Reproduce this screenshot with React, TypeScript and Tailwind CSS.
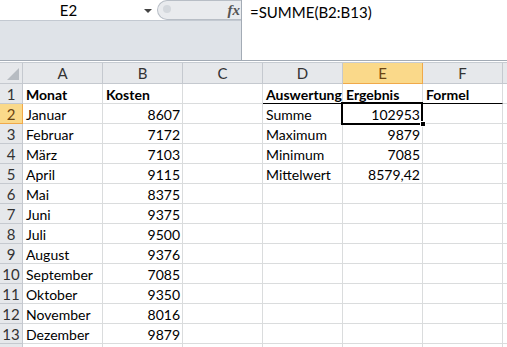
import React from 'react';

const cols = ['A', 'B', 'C', 'D', 'E', 'F'];

type Cell = { v?: string; bold?: boolean; right?: boolean; under?: boolean };

const months = ['Januar', 'Februar', 'März', 'April', 'Mai', 'Juni', 'Juli', 'August', 'September', 'Oktober', 'November', 'Dezember'];
const costs = ['8607', '7172', '7103', '9115', '8375', '9375', '9500', '9376', '7085', '9350', '8016', '9879'];

const summary: [string, string][] = [
  ['Summe', '102953'],
  ['Maximum', '9879'],
  ['Minimum', '7085'],
  ['Mittelwert', '8579,42'],
];

function buildRows(): Cell[][] {
  const rows: Cell[][] = [];
  rows.push([
    { v: 'Monat', bold: true },
    { v: 'Kosten', bold: true },
    {},
    { v: 'Auswertung', bold: true, under: true },
    { v: 'Ergebnis', bold: true, under: true },
    { v: 'Formel', bold: true, under: true },
  ]);
  months.forEach((m, i) => {
    const s = summary[i];
    rows.push([
      { v: m },
      { v: costs[i], right: true },
      {},
      s ? { v: s[0] } : {},
      s ? { v: s[1], right: true } : {},
      {},
    ]);
  });
  rows.push([{}, {}, {}, {}, {}, {}]);
  return rows;
}

const FormulaBar: React.FC = () => (
  <div className="flex h-[61px] border-b border-[#a3abb5]">
    <div className="flex w-[241px] flex-col bg-[#dfe3e8]">
      <div className="flex h-[21px] border-b border-[#c3c9d1] bg-white">
        <div className="relative flex w-[157px] items-center justify-center text-[15px] text-black">
          <span className="-ml-[20px]">E2</span>
          <span className="absolute left-[144px] top-[9px] h-0 w-0 border-x-[4px] border-t-[4px] border-x-transparent border-t-[#444]" />
        </div>
        <div className="relative flex flex-1 items-center justify-end rounded-l-full border border-r-0 border-[#b8bec6] bg-[#e9ebee] pr-[1px]">
          <span className="absolute left-[5px] top-[4px] h-[8px] w-[8px] rounded-full bg-[#d4d8dd]" />
          <span className="font-['Liberation_Serif',serif] text-[15px] font-bold italic leading-none text-[#555]">fx</span>
        </div>
      </div>
    </div>
    <div className="flex-1 border-l border-[#a3abb5] bg-white pl-[8px] pt-[1px] text-[15px] text-black">
      =SUMME(B2:B13)
    </div>
  </div>
);

const App: React.FC = () => {
  const rows = buildRows();
  return (
    <div className="h-[347px] w-[507px] overflow-hidden bg-white font-['Lato','Noto_Sans',sans-serif]">
      <FormulaBar />
      <div className="h-[2px] border-b border-[#c6cbd1] bg-white" />
      <div className="grid grid-cols-[23px_repeat(6,80px)_5px]">
        <div className="relative h-[21px] border-b border-r border-[#c5c9cf] bg-[#e6e8eb]">
          <span className="absolute bottom-[3px] right-[3px] h-0 w-0 border-b-[12px] border-l-[12px] border-l-transparent border-b-[#b7bcc2]" />
        </div>
        {cols.map(c => (
          <div
            key={c}
            className={
              c === 'E'
                ? 'flex h-[21px] items-center justify-center border-b border-r border-[#f0a94a] bg-[#fad98a] text-[15px] text-[#6b4412]'
                : 'flex h-[21px] items-center justify-center border-b border-r border-[#c5c9cf] bg-[#e6e8eb] text-[15px] text-[#333]'
            }
          >
            {c}
          </div>
        ))}
        <div className="h-[21px] border-b border-[#c5c9cf] bg-[#e6e8eb]" />

        {rows.map((row, r) => (
          <React.Fragment key={r}>
            <div
              className={
                r === 1
                  ? 'flex h-[20px] items-center justify-center border-b border-r border-[#f0a94a] bg-[#fad98a] pt-[1px] text-[15px] text-[#6b4412]'
                  : 'flex h-[20px] items-center justify-center border-b border-r border-[#c5c9cf] bg-[#e6e8eb] pt-[1px] text-[15px] text-[#333]'
              }
            >
              {r < 13 ? r + 1 : ''}
            </div>
            {row.map((cell, ci) => (
              <div
                key={ci}
                className={[
                  'relative flex h-[20px] items-center whitespace-nowrap border-r border-[#dadcdd] px-[3px] pt-[1px] text-[14px] text-black',
                  cell.under ? 'border-b border-b-black' : 'border-b',
                  cell.right ? 'justify-end pr-[2px]' : 'justify-start',
                  cell.bold ? 'font-bold' : '',
                ].join(' ')}
              >
                <span className="relative z-10">{cell.v}</span>
                {r === 1 && ci === 4 && (
                  <>
                    <span className="absolute -left-[2px] -top-[2px] z-20 h-[23px] w-[82px] border-2 border-black" />
                    <span className="absolute -right-[4px] -bottom-[4px] z-30 h-[6px] w-[6px] border border-white bg-black" />
                  </>
                )}
              </div>
            ))}
            <div className="h-[20px] border-b border-[#dadcdd]" />
          </React.Fragment>
        ))}
      </div>
    </div>
  );
};

export default App;
